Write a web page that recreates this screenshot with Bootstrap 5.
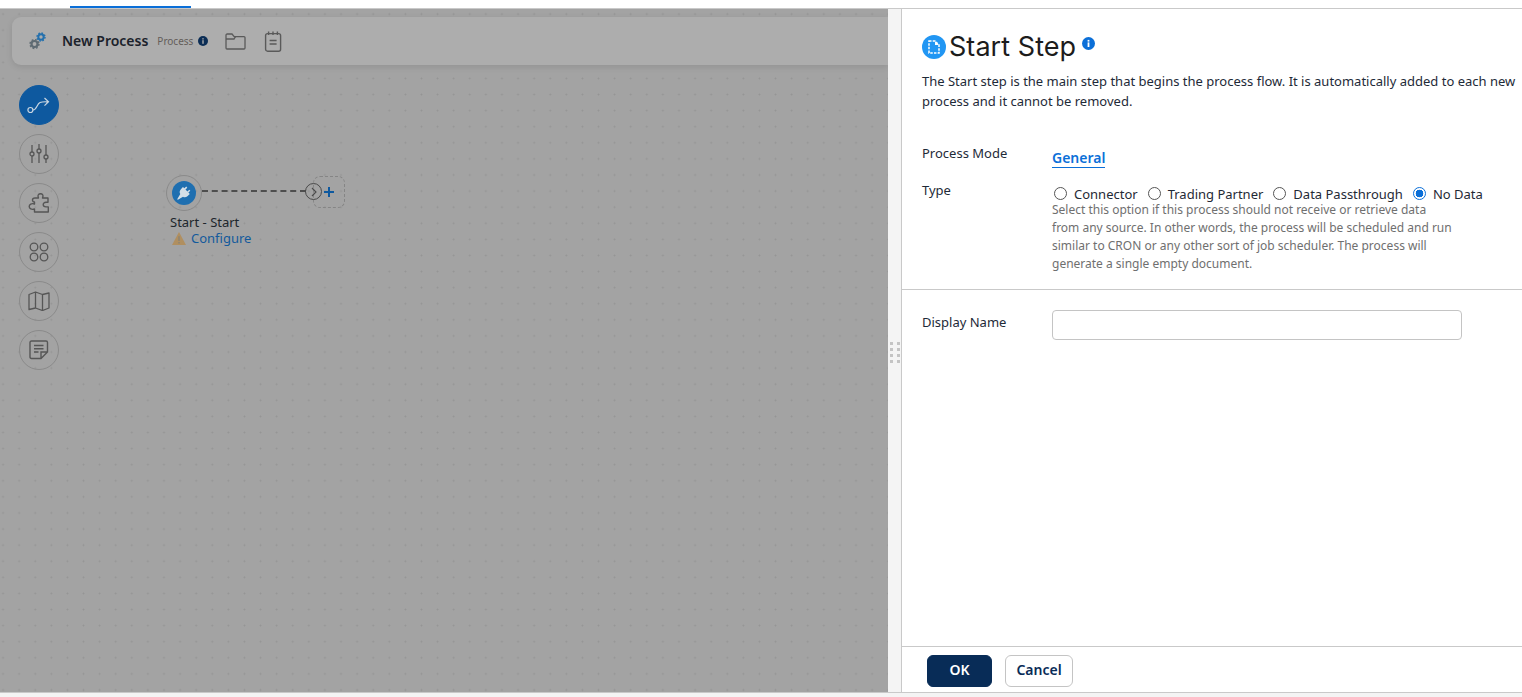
<!DOCTYPE html>
<html lang="en"><head><meta charset="utf-8"><title>Start Step</title>
<link href="https://cdn.jsdelivr.net/npm/bootstrap@5.3.0/dist/css/bootstrap.min.css" rel="stylesheet">
<style>
html,body{height:100%;overflow:hidden}
body{font-family:"Noto Sans",sans-serif;font-size:13px;color:#1f2a36;background:#f4f4f4}
.app-root{height:697px;width:1522px}
.top-strip{height:9px;background:#fff;border-bottom:1px solid #c9c9c9;padding-left:70px}
.top-tab{width:121px;height:2px;margin-top:6px;background:#0b6fd8}
.work-area{height:683px}
.canvas-pane{width:888px;background-color:#a3a3a3;background-image:radial-gradient(circle,#949494 0.8px,transparent 1.1px);background-size:16.1px 16.1px;background-position:-5px -3px;padding:8px 0 0 12px}
.head-bar{height:48px;background:#adadad;border-radius:9px 0 0 9px;box-shadow:0 2px 6px rgba(0,0,0,.1);padding-left:16px}
.proc-title{font-size:14px;font-weight:600;color:#1b222b;margin-left:14px;line-height:1}
.proc-kind{font-size:10px;color:#635d5a;margin-left:9px}
.info-dark{margin-left:5px}
.folder-ico{margin-left:17px}
.note-ico{margin-left:18px}
.tool-col{width:40px;margin:20px 0 0 7px;gap:9px}
.tool-btn{width:40px;height:40px;border:1px solid #8a8a8a;border-radius:50%}
.tool-on{background:#0e599f;border-color:#0e599f}
.flow-node{left:166px;top:166px}
.node-ring{width:36px;height:36px;border:1px solid #8a8a8a;border-radius:50%}
.node-disc{width:24px;height:24px;border-radius:50%;background:#1f6fb0}
.node-label{left:170px;top:205px;font-size:13px;line-height:16px;color:#20262c}
.warn-ico{margin:0 5px 0 2px}
.node-link{color:#135a9c}
.flow-line{left:202px;top:181px;width:104px;border-top:2px dashed #4e4e4e}
.add-box{left:313px;top:167px;width:32px;height:32px;border:1px dashed #858585;border-radius:7px}
.arrow-ring{left:305px;top:174px;width:17px;height:17px;border:1px solid #4a4a4a;border-radius:50%}
.split-bar{width:13px;background:#f4f4f4}
.grip{gap:3px 4px;grid-template-columns:3px 3px;margin-top:3px}
.grip i{display:block;width:3px;height:3px;background:#c4c4c4}
.side-panel{border-left:1px solid #c9c9c9;background:#fff}
.panel-top{padding:22px 0 0 20px;height:280px}
.panel-icon{width:24px;height:24px;border-radius:50%;background:#2196f3}
.panel-title{font-family:"Inter",sans-serif;font-size:27px;font-weight:400;line-height:32px;margin:0 0 0 3px;color:#1c1c1c;letter-spacing:.05px}
.info-blue{margin:0 0 8px 6px}
.panel-lede{margin:8px 0 0;line-height:20px;color:#1e2a38}
.form-rowline{display:flex}
.row-key{width:130px;flex:none;color:#1e2a38}
.mode-row{margin-top:33px}
.type-row{margin-top:12px}
.mode-link{font-size:14px;font-weight:600;color:#0b6fd8;border-bottom:1px solid #0b6fd8;line-height:18px;margin-top:5px;display:inline-block}
.radio-line{margin:5px 0 0 2px}
.radio-item{display:flex;align-items:center;gap:7px;margin:0 10px 0 0;line-height:16px}
.radio-item .form-check-input{width:13px;height:13px;margin:0;border:1px solid #555;flex:none;background-color:#fff}
.radio-item .form-check-input:checked{background-color:#fff;border-color:#0b6fd8;background-image:radial-gradient(circle,#0b6fd8 0 3.6px,#fff 4.1px);background-size:100% 100%}
.type-help{font-size:12px;line-height:18px;color:#6f6f6f;width:402px;margin:-1px 0 0}
.panel-name{border-top:1px solid #c9c9c9;padding:20px 0 0 20px}
.name-key{padding-top:3px}
.name-input{width:410px;height:30px;border:1px solid #c4c4c4;border-radius:4px;font-size:13px}
.panel-foot{height:46px;border-top:1px solid #c9c9c9;padding:2px 0 0 25px;gap:13px}
.ok-btn{width:65px;height:32px;padding:0 0 2px;background:#082c57;border-color:#082c57;color:#fff;font-weight:600;font-size:14px}
.no-btn{width:68px;height:32px;padding:0 0 2px;background:#fff;border:1px solid #c4c4c4;color:#082c57;font-weight:600;font-size:14px}
.bottom-strip{height:5px;background:#f4f4f4;border-top:1px solid #c9c9c9}
</style></head><body>
<div class="app-root d-flex flex-column">
<div class="top-strip"><div class="top-tab"></div></div>
<div class="work-area d-flex position-relative">
 <div class="canvas-pane flex-shrink-0">
  <div class="head-bar d-flex align-items-center">
   <svg width="20" height="20" viewBox="0 0 20 20" fill="none"><g stroke="#5f6b73"><circle cx="6.500" cy="13" r="3" stroke-width="2.200"/><circle cx="6.500" cy="13" r="4.400" stroke-width="1.500" stroke-dasharray="1.800 1.650"/></g><g stroke="#2470ad"><circle cx="13" cy="6" r="2.700" stroke-width="2"/><circle cx="13" cy="6" r="4" stroke-width="1.400" stroke-dasharray="1.600 1.540"/></g></svg>
   <span class="proc-title">New Process</span>
   <span class="proc-kind">Process</span>
   <svg class="info-dark" width="10" height="10" viewBox="0 0 10 10"><circle cx="5" cy="5" r="5" fill="#0b2d55"/><rect x="4.300" y="4.200" width="1.400" height="3.600" fill="#adadad"/><rect x="4.300" y="2.200" width="1.400" height="1.300" fill="#adadad"/></svg>
   <svg class="folder-ico" width="21" height="17" viewBox="0 0 21 17" fill="none" stroke="#5a5a5a" stroke-width="1.300"><path d="M1 15V2.200C1 1.500 1.500 1 2.200 1H7l2.200 2.600H19c.6 0 1 .4 1 1V15c0 .6-.4 1-1 1H2c-.6 0-1-.4-1-1Z"/><path d="M1 6h8l1.500-2.400"/></svg>
   <svg class="note-ico" width="18" height="21" viewBox="0 0 18 21" fill="none" stroke="#5a5a5a" stroke-width="1.400"><rect x="1.600" y="2.600" width="15" height="17.600" rx="2"/><path d="M4.600 .6v3.400M9 .6v3.400M13.400 .6v3.400"/><path d="M5.600 9.600h7M5.600 13h7" stroke-width="1.500"/></svg>
  </div>
  <div class="tool-col d-flex flex-column">
   <div class="tool-btn tool-on d-flex align-items-center justify-content-center"><svg width="24" height="18" viewBox="0 0 24 18" fill="none" stroke="#c9d6e2" stroke-width="1.200"><circle cx="3.400" cy="14" r="2.500"/><path d="M6 14c4-.3 3.700-6 7-7.500 2.500-1 5-.7 8-.7M17.500 2l4 3.800-4 3.800"/></svg></div>
   <div class="tool-btn d-flex align-items-center justify-content-center"><svg width="20" height="20" viewBox="0 0 20 20" fill="none" stroke="#565656" stroke-width="1.300"><path d="M3 1v7M3 12v7M10 0v5M10 9v10M17 1v10M17 15v4"/><circle cx="3" cy="10" r="2"/><circle cx="10" cy="7" r="2"/><circle cx="17" cy="13" r="2"/></svg></div>
   <div class="tool-btn d-flex align-items-center justify-content-center"><svg width="22" height="20" viewBox="0 0 22 20" fill="none" stroke="#565656" stroke-width="1.400" stroke-linejoin="round"><path d="M7 5h3.500C9 1.500 11 .8 12.500.8S16 1.500 14.500 5H20v4.300h-2c-1.800 0-2.800 1-2.800 2.300s1 2.300 2.800 2.300h2.300V19H6.500v-3C3.500 17 1.200 15.800 1.200 13.500S3.500 10 6.500 11V9C4 9.200 3.500 5 7 5Z"/></svg></div>
   <div class="tool-btn d-flex align-items-center justify-content-center"><svg width="20" height="20" viewBox="0 0 20 20" fill="none" stroke="#565656" stroke-width="1.300"><circle cx="5" cy="5" r="3.800"/><circle cx="15" cy="5" r="3.800"/><circle cx="5" cy="15" r="3.800"/><circle cx="15" cy="15" r="3.800"/></svg></div>
   <div class="tool-btn d-flex align-items-center justify-content-center"><svg width="22" height="20" viewBox="0 0 22 20" fill="none" stroke="#565656" stroke-width="1.300" stroke-linejoin="round"><path d="M1 3.500 7.500 1l7 2.500L21 2v15l-6.500 2.500-7-2.500L1 18.500ZM7.500 1v16M14.500 3.500v16"/></svg></div>
   <div class="tool-btn d-flex align-items-center justify-content-center"><svg width="20" height="20" viewBox="0 0 20 20" fill="none" stroke="#565656" stroke-width="1.400"><path d="M12 18.500H2.500c-1 0-1.500-.5-1.500-1.500V2.500C1 1.500 1.500 1 2.500 1h14.500c1 0 1.500.5 1.500 1.500V12ZM12 18.500V12h6.500"/><path d="M5 5.500h9.500M5 8.800h9.500M5 12h4.500" stroke-width="1.500"/></svg></div>
  </div>
 </div>
 <div class="flow-line position-absolute"></div>
 <div class="node-ring flow-node position-absolute d-flex align-items-center justify-content-center"><div class="node-disc d-flex align-items-center justify-content-center"><svg width="16" height="16" viewBox="0 0 16 16" fill="#d5dfe7"><path d="M10.200 1.400 8.400 3.200 6.900 2 4.700 4.500c-1.300 1.500-1.300 3.300-.4 4.600L1.200 14.200l.7.600L7 11.800c1.300.8 3 .7 4.400-.6L13.800 9l-1.400-1.500 1.900-1.800-1-1-1.900 1.800-1.900-1.900 1.800-1.800Z"/></svg></div></div>
 <div class="add-box position-absolute d-flex align-items-center justify-content-center"><svg width="12" height="12" viewBox="0 0 12 12"><path d="M6 1v10M1 6h10" stroke="#0e599f" stroke-width="2"/></svg></div>
 <div class="arrow-ring position-absolute d-flex align-items-center justify-content-center"><svg width="8" height="10" viewBox="0 0 8 10" fill="none" stroke="#4a4a4a" stroke-width="1.100"><path d="M2 1l4 4-4 4"/></svg></div>
 <div class="node-label position-absolute"><div>Start - Start</div><div class="d-flex align-items-center"><svg class="warn-ico" width="14" height="13" viewBox="0 0 14 13"><path d="M7 0 14 13H0Z" fill="#b08f60"/><rect x="6.300" y="4.200" width="1.400" height="4.800" fill="#8a8275"/><rect x="6.300" y="10" width="1.400" height="1.500" fill="#8a8275"/></svg><span class="node-link">Configure</span></div></div>
 <div class="split-bar flex-shrink-0 d-flex align-items-center justify-content-center"><div class="grip d-grid"><i></i><i></i><i></i><i></i><i></i><i></i><i></i><i></i></div></div>
 <div class="side-panel flex-grow-1 d-flex flex-column">
  <div class="panel-top">
   <div class="d-flex align-items-center">
    <div class="panel-icon d-flex align-items-center justify-content-center flex-shrink-0"><svg width="12" height="14" viewBox="0 0 12 14" fill="none" stroke="#fff" stroke-width="1.500"><path d="M1 1h6l4 4v8H1Z" stroke-dasharray="2.500 1.200"/><path d="M7 1v4h4" fill="#fff" stroke="none"/></svg></div>
    <h1 class="panel-title">Start Step</h1>
    <svg class="info-blue" width="13" height="13" viewBox="0 0 13 13"><circle cx="6.500" cy="6.500" r="6.500" fill="#0b6fd8"/><rect x="5.600" y="5.400" width="1.800" height="4.600" fill="#fff"/><rect x="5.600" y="2.900" width="1.800" height="1.700" fill="#fff"/></svg>
   </div>
   <p class="panel-lede">The Start step is the main step that begins the process flow. It is automatically added to each new process and it cannot be removed.</p>
   <div class="form-rowline mode-row"><div class="row-key">Process Mode</div><div><a class="mode-link text-decoration-none" href="#">General</a></div></div>
   <div class="form-rowline type-row"><div class="row-key">Type</div><div>
     <div class="d-flex radio-line">
      <label class="radio-item"><input class="form-check-input" type="radio" name="t">Connector</label>
      <label class="radio-item"><input class="form-check-input" type="radio" name="t">Trading Partner</label>
      <label class="radio-item"><input class="form-check-input" type="radio" name="t">Data Passthrough</label>
      <label class="radio-item"><input class="form-check-input" type="radio" name="t" checked>No Data</label>
     </div>
     <p class="type-help">Select this option if this process should not receive or retrieve data from any source. In other words, the process will be scheduled and run similar to CRON or any other sort of job scheduler. The process will generate a single empty document.</p>
   </div></div>
  </div>
  <div class="panel-name flex-grow-1"><div class="form-rowline"><div class="row-key name-key">Display Name</div><input class="form-control name-input" type="text" aria-label="Display Name"></div></div>
  <div class="panel-foot d-flex align-items-center"><button class="btn ok-btn" type="button">OK</button><button class="btn no-btn" type="button">Cancel</button></div>
 </div>
</div>
<div class="bottom-strip"></div>
</div>
<script src="https://cdn.jsdelivr.net/npm/bootstrap@5.3.0/dist/js/bootstrap.bundle.min.js"></script>
</body></html>
